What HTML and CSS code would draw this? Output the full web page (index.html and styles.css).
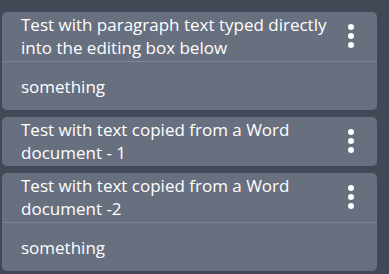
FILE: index.html
```html
<!DOCTYPE html>
<html>
<head>
<meta charset="utf-8">
<link rel="stylesheet" href="styles.css">
</head>
<body>
<div class="list">
  <div class="card">
    <div class="card-head">
      <div class="title">Test with paragraph text typed directly into the editing box below</div>
      <div class="kebab"><span></span><span></span><span></span></div>
    </div>
    <div class="card-body">something</div>
  </div>
  <div class="card">
    <div class="card-head last">
      <div class="title">Test with text copied from a Word document - 1</div>
      <div class="kebab"><span></span><span></span><span></span></div>
    </div>
  </div>
  <div class="card">
    <div class="card-head">
      <div class="title">Test with text copied from a Word document -2</div>
      <div class="kebab"><span></span><span></span><span></span></div>
    </div>
    <div class="card-body">something</div>
  </div>
</div>
</body>
</html>
```
FILE: styles.css
```css
html, body {
  margin: 0;
  padding: 0;
  background: #424855;
}
body {
  font-family: "Open Sans", "Lato", sans-serif;
  color: #ffffff;
}
.list {
  display: flex;
  flex-direction: column;
  gap: 7px;
  padding: 12px 0 0 2px;
  width: 375px;
}
.card {
  background: #687080;
  border-radius: 5px;
  overflow: hidden;
}
.card-head {
  display: flex;
  align-items: center;
  padding: 1px 0 2px 19px;
  min-height: 46px;
  border-bottom: 1px solid #7b8290;
}
.card-head.last {
  border-bottom: none;
}
.title {
  flex: 1;
  font-size: 17px;
  line-height: 23px;
  padding-right: 6px;
}
.kebab {
  width: 6px;
  display: flex;
  flex-direction: column;
  align-items: center;
  gap: 3px;
  margin-right: 23px;
}
.kebab span {
  width: 6px;
  height: 6px;
  border-radius: 50%;
  background: #ffffff;
}
.card-body {
  font-size: 17px;
  line-height: 23px;
  padding: 13px 19px 12px;
}
```
